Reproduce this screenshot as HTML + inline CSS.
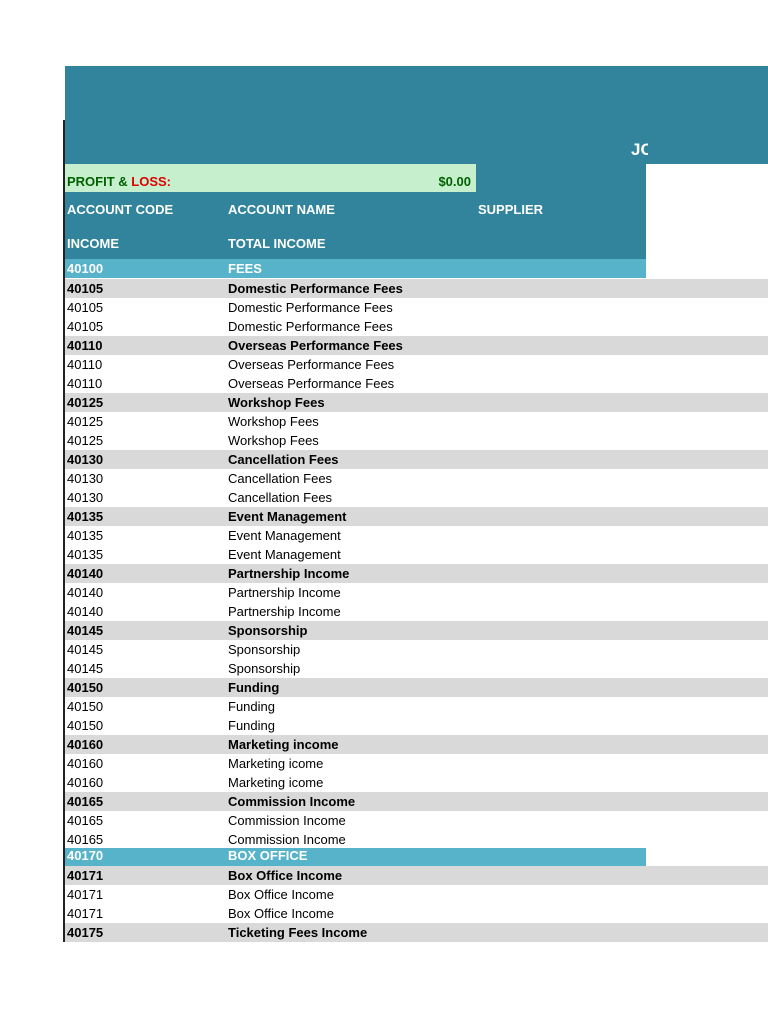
<!DOCTYPE html>
<html><head><meta charset="utf-8"><style>
body{margin:0;width:768px;height:1024px;background:#fff;position:relative;overflow:hidden;font-family:"Liberation Sans",sans-serif;font-size:13px;}
.a{position:absolute;white-space:nowrap}
.row{position:absolute;left:65px;height:19px;line-height:19px;width:703px;white-space:nowrap}
.row span{position:absolute;top:0;}
.c1{left:2px}.c2{left:163px}
.b{font-weight:bold}
.g{background:#d9d9d9}
.hl{background:#56b3c9;width:581px;color:#fff;font-weight:bold}
</style></head><body>
<div class="a" style="left:65px;top:66px;width:703px;height:98px;background:#31849b"></div>
<div class="a" style="left:65px;top:164px;width:581px;height:95px;background:#31849b"></div>
<div class="a" style="left:63px;top:120px;width:2px;height:822px;background:#222"></div>
<div class="a" style="left:631px;top:140px;width:17px;overflow:hidden;color:#fff;font-weight:bold;font-size:17px">JO</div>
<div class="a" style="left:646px;top:164px;width:122px;height:95px;background:#fff"></div>
<div class="a" style="left:65px;top:164px;width:411px;height:28px;background:#c6efce;font-weight:bold;line-height:36px">
<span class="a" style="left:2px;color:#006100">PROFIT &amp; <span style="color:#e00000">LOSS:</span></span>
<span class="a" style="right:5px;color:#006100">$0.00</span></div>
<div class="a b" style="left:67px;top:202px;color:#fff">ACCOUNT CODE</div>
<div class="a b" style="left:228px;top:202px;color:#fff">ACCOUNT NAME</div>
<div class="a b" style="left:478px;top:202px;color:#fff">SUPPLIER</div>
<div class="a b" style="left:67px;top:236px;color:#fff">INCOME</div>
<div class="a b" style="left:228px;top:236px;color:#fff">TOTAL INCOME</div>
<div class="row hl" style="top:259px"><span class="c1">40100</span><span class="c2">FEES</span></div>
<div id="rows"></div>
<script>
var d=[["40105","Domestic Performance Fees"],["40110","Overseas Performance Fees"],["40125","Workshop Fees"],["40130","Cancellation Fees"],["40135","Event Management"],["40140","Partnership Income"],["40145","Sponsorship"],["40150","Funding"],["40160","Marketing income","Marketing icome"],["40165","Commission Income"]];
var h="",y=279;
d.forEach(function(r){for(var i=0;i<3;i++){var n=i?(r[2]||r[1]):r[1];h+='<div class="row'+(i?'':' g b')+'" style="top:'+y+'px"><span class="c1">'+r[0]+'</span><span class="c2">'+n+'</span></div>';y+=19;}});
h+='<div class="row hl" style="top:848px;height:18px;line-height:15px"><span class="c1">40170</span><span class="c2">BOX OFFICE</span></div>';
y=866;
[["40171","Box Office Income",1],["40171","Box Office Income",0],["40171","Box Office Income",0],["40175","Ticketing Fees Income",1]].forEach(function(r){h+='<div class="row'+(r[2]?' g b':'')+'" style="top:'+y+'px"><span class="c1">'+r[0]+'</span><span class="c2">'+r[1]+'</span></div>';y+=19;});
document.getElementById("rows").innerHTML=h;
</script>
</body></html>
